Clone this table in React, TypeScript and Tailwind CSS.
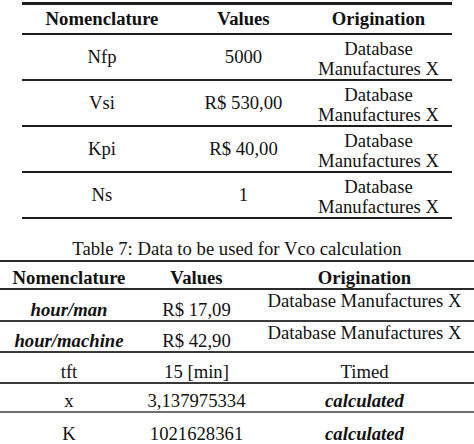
type TopRow = { name: string; value: string };

const topRows: TopRow[] = [
  { name: 'Nfp', value: '5000' },
  { name: 'Vsi', value: 'R$ 530,00' },
  { name: 'Kpi', value: 'R$ 40,00' },
  { name: 'Ns', value: '1' },
];

type BottomRow = {
  name: string;
  value: string;
  origin: string;
  nameStyle?: string;
  originStyle?: string;
  height: string;
  border: string;
};

const bottomRows: BottomRow[] = [
  {
    name: 'hour/man',
    value: 'R$ 17,09',
    origin: 'Database Manufactures X',
    nameStyle: 'font-bold italic',
    originStyle: 'self-start pt-[1px]',
    height: 'h-[32px]',
    border: 'border-b-2 border-[#3a3a3a]',
  },
  {
    name: 'hour/machine',
    value: 'R$ 42,90',
    origin: 'Database Manufactures X',
    nameStyle: 'font-bold italic',
    originStyle: 'self-start pt-[1px]',
    height: 'h-[31px]',
    border: 'border-b-2 border-[#3a3a3a]',
  },
  {
    name: 'tft',
    value: '15 [min]',
    origin: 'Timed',
    height: 'h-[31px]',
    border: 'border-b-2 border-[#3a3a3a]',
  },
  {
    name: 'x',
    value: '3,137975334',
    origin: 'calculated',
    originStyle: 'font-bold italic',
    height: 'h-[29px]',
    border: 'border-b-2 border-[#6f6f6f]',
  },
  {
    name: 'K',
    value: '1021628361',
    origin: 'calculated',
    originStyle: 'font-bold italic',
    height: 'h-[31px]',
    border: '',
  },
];

export default function App() {
  return (
    <div className="w-[474px] h-[444px] overflow-hidden bg-white text-[#111] text-[18.7px] leading-[20px] font-['Liberation_Serif','Times_New_Roman',serif]">
      {/* table 6 (top, inset) */}
      <div className="pt-[2px] px-[22px]">
        <div className="border-t-[3px] border-[#1e1e1e]">
          <div className="h-[30px] border-b-2 border-[#1e1e1e] grid grid-cols-[160px_123px_147px] items-center text-center font-bold">
            <div>Nomenclature</div>
            <div>Values</div>
            <div>Origination</div>
          </div>
          {topRows.map((r) => (
            <div
              key={r.name}
              className="h-[46px] border-b-2 border-[#1e1e1e] grid grid-cols-[160px_123px_147px] items-center text-center"
            >
              <div>{r.name}</div>
              <div>{r.value}</div>
              <div className="self-start pt-[4px]">
                Database
                <br />
                Manufactures X
              </div>
            </div>
          ))}
        </div>
      </div>

      {/* table 7 */}
      <div className="mt-[20px] h-[20px] text-center">Table 7: Data to be used for Vco calculation</div>
      <div className="mt-[1px] border-t-2 border-[#2a2a2a]">
        <div className="h-[28px] border-b-2 border-[#2a2a2a] grid grid-cols-[138px_117px_219px] items-end text-center font-bold">
          <div>Nomenclature</div>
          <div>Values</div>
          <div>Origination</div>
        </div>
        {bottomRows.map((r) => (
          <div
            key={r.name}
            className={`${r.height} ${r.border} grid grid-cols-[138px_117px_219px] items-end text-center`}
          >
            <div className={r.nameStyle}>{r.name}</div>
            <div>{r.value}</div>
            <div className={r.originStyle}>{r.origin}</div>
          </div>
        ))}
      </div>
    </div>
  );
}
